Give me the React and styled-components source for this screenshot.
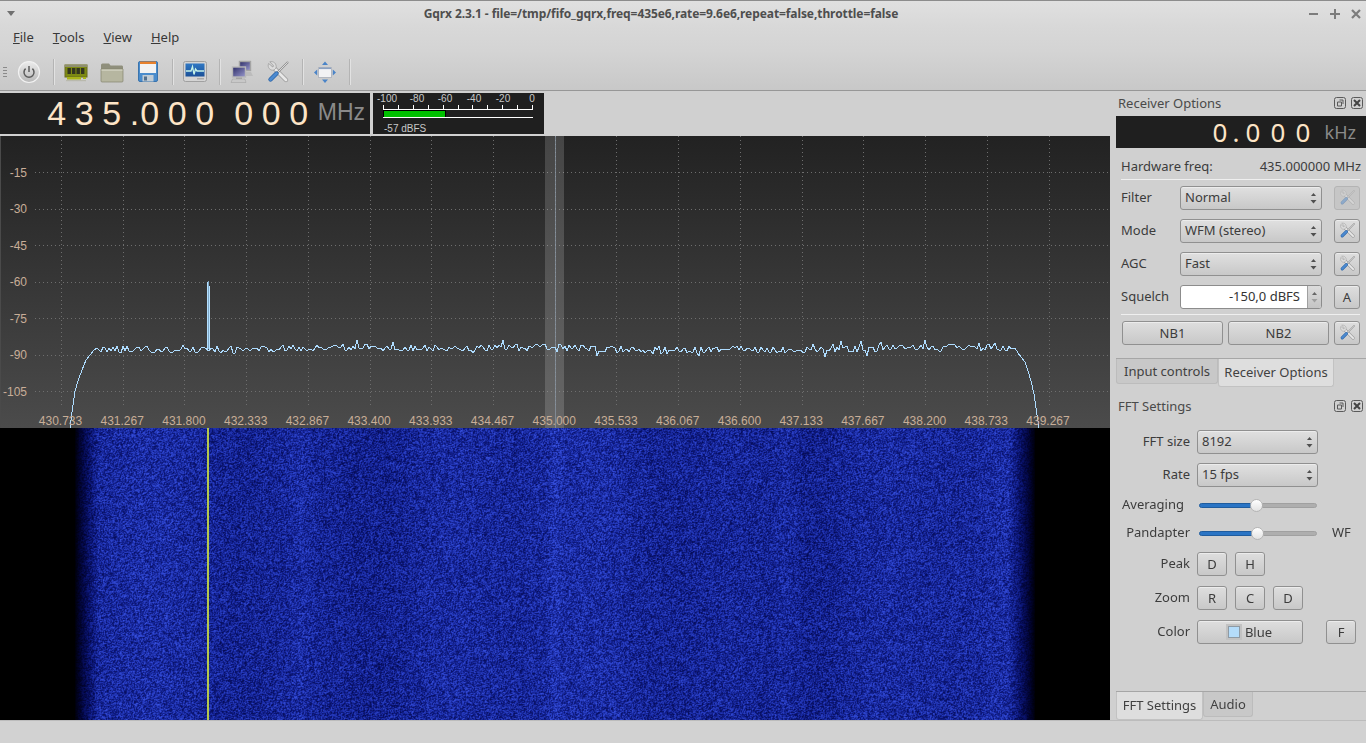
import React, { useEffect, useRef } from 'react';
import styled, { createGlobalStyle } from 'styled-components';

const GlobalStyle = createGlobalStyle`
  html, body { margin: 0; padding: 0; background: #d0d0d0; overflow: hidden; }
  body { font-family: "Noto Sans", "Open Sans", sans-serif; font-size: 13px; color: #3c3c3c; }
  * { box-sizing: border-box; }
`;

const Window = styled.div`
  width: 1366px;
  height: 743px;
  display: flex;
  flex-direction: column;
  background: #d0d0d0;
`;

const TitleBar = styled.div`
  height: 27px;
  border-top: 1px solid #8c8c8c;
  display: flex;
  align-items: center;
  padding: 0 4px 1px 6px;
  background: linear-gradient(#e0e0e0, #d8d8d8);
`;

const TitleText = styled.div`
  flex: 1;
  text-align: center;
  font-size: 12px;
  font-weight: 700;
  letter-spacing: -0.085px;
  padding-right: 2px;
  color: #4e4e4e;
`;

const WinButtons = styled.div`
  display: flex;
  gap: 9px;
  align-items: center;
`;

const MenuBar = styled.div`
  height: 24px;
  display: flex;
  align-items: center;
  padding: 0 0 4px 13px;
  gap: 19px;
  background: linear-gradient(#d8d8d8, #d4d4d4);
`;

const MenuItem = styled.span`
  font-size: 13px;
  color: #383838;
  &::first-letter { text-decoration: underline; }
`;

const ToolBar = styled.div`
  height: 40px;
  display: flex;
  align-items: center;
  padding-top: 2px;
  background: linear-gradient(#d4d4d4, #c8c8c8);
  border-bottom: 1px solid #979797;
`;

const Handle = styled.div`
  width: 4px;
  height: 10px;
  margin: 0 4px 0 3px;
  background: repeating-linear-gradient(#8a8a8a 0 1px, transparent 1px 3px);
`;

const ToolButton = styled.div`
  width: 36px;
  height: 36px;
  display: flex;
  align-items: center;
  justify-content: center;
`;

const ToolSep = styled.div`
  width: 1px;
  height: 26px;
  margin: 0 4px 0 6px;
  background: #b4b4b4;
  box-shadow: 1px 0 0 #e2e2e2;
`;

const Main = styled.div`
  flex: 1;
  display: flex;
  min-height: 0;
`;

const LeftColumn = styled.div`
  width: 1110px;
  display: flex;
  flex-direction: column;
`;

const HeaderRow = styled.div`
  height: 45px;
  padding: 2px 0;
  display: flex;
  gap: 3px;
`;

const FreqDisplay = styled.div`
  width: 370px;
  background: #1f1f1f;
  display: flex;
  justify-content: flex-end;
  align-items: center;
  padding: 0 5px 2px 0;
  font-family: "Liberation Sans", Arial, sans-serif;
`;

const LcdDisplay = styled.div`
  height: 32px;
  background: #1f1f1f;
  display: flex;
  justify-content: flex-end;
  align-items: center;
  padding-right: 10px;
  font-family: "Noto Sans", sans-serif;
`;

const Digit = styled.span`
  width: ${p => p.$w}px;
  margin-left: ${p => p.$shift || 0}px;
  font-size: ${p => p.$size}px;
  color: #fde4c6;
  line-height: 1;
  flex: none;
`;

const Unit = styled.span`
  font-size: ${p => p.$size}px;
  color: #8a8a8a;
  line-height: 1;
  margin-left: ${p => p.$gap || 0}px;
`;

const MeterBox = styled.div`
  width: 171px;
  background: #1f1f1f;
`;

const Plot = styled.div`
  height: 292px;
  background: linear-gradient(#222222, #4b4b4b);
  border-left: 1px solid #4a4a4a;
`;

const Wave = styled.canvas`
  display: block;
  width: 1110px;
  height: 292px;
`;

const VSplitter = styled.div`
  width: 4px;
  margin: 0 1px;
  background-image: radial-gradient(#f6f6f6 0.5px, transparent 0.6px);
  background-size: 2px 2px;
`;

const Dock = styled.div`
  flex: 1;
  display: flex;
  flex-direction: column;
  min-width: 0;
`;

const DockTitle = styled.div`
  height: ${p => p.$h}px;
  display: flex;
  align-items: center;
  justify-content: space-between;
  padding: 0 3px 2px 2px;
  color: #4a4a4a;
  font-size: 13px;
`;

const DockIcons = styled.div`
  display: flex;
  gap: 5px;
`;

const InfoRow = styled.div`
  height: 31px;
  padding: 9px 5px 0;
  display: flex;
  justify-content: space-between;
  line-height: 18px;
`;

const Rule = styled.div`
  height: 1px;
  margin: ${p => p.$mt}px 6px ${p => p.$mb}px 5px;
  background: #efefef;
`;

const Row = styled.div`
  height: 24px;
  margin-top: ${p => p.$mt || 0}px;
  display: flex;
  align-items: center;
  padding-left: 5px;
`;

const RowLabel = styled.span`
  width: 59px;
  flex: none;
  margin-bottom: 2px;
`;

const ComboBox = styled.div`
  width: ${p => p.$w}px;
  height: 24px;
  flex: none;
  display: flex;
  align-items: center;
  justify-content: space-between;
  padding: 0 4px 0 4px;
  border: 1px solid #909090;
  border-radius: 3px;
  background: linear-gradient(#e0e0e0, #c8c8c8);
  box-shadow: inset 0 1px 0 #ececec;
`;

const ComboText = styled.span`
  margin-bottom: 2px;
`;

const SpinBox = styled.div`
  width: 142px;
  height: 24px;
  flex: none;
  display: flex;
  border: 1px solid #8c8c8c;
  border-radius: 3px;
  background: #fff;
  overflow: hidden;
`;

const SpinValue = styled.div`
  flex: 1;
  text-align: right;
  padding-right: 7px;
  line-height: 20px;
  color: #333;
`;

const SpinArrows = styled.div`
  width: 14px;
  display: flex;
  align-items: center;
  justify-content: center;
  border-left: 1px solid #a0a0a0;
  background: linear-gradient(#dcdcdc, #c4c4c4);
`;

const PushButton = styled.div`
  width: ${p => p.$w}px;
  height: 24px;
  flex: none;
  margin-left: ${p => p.$ml || 0}px;
  display: flex;
  align-items: center;
  justify-content: center;
  gap: 5px;
  padding-bottom: 1px;
  border: 1px solid ${p => (p.$off ? '#b4b4b4' : '#909090')};
  border-radius: 3px;
  background: ${p => (p.$off ? '#c6c6c6' : 'linear-gradient(#dedede, #c8c8c8)')};
  box-shadow: ${p => (p.$off ? 'none' : 'inset 0 1px 0 #ececec')};
`;

const Swatch = styled.span`
  width: 12px;
  height: 12px;
  background: #b4dcfa;
  border: 1px solid #8e9aa4;
  outline: 2px solid #c2c2c2;
`;

const TabBar = styled.div`
  margin-top: ${p => p.$mt || 0}px;
  border-top: 1px solid #a6a6a6;
  display: flex;
  align-items: flex-start;
`;

const Tab = styled.div`
  height: ${p => (p.$on ? 28 : 25)}px;
  width: ${p => p.$w}px;
  display: flex;
  align-items: center;
  justify-content: center;
  color: #414141;
  background: ${p => (p.$on ? '#dedede' : '#c8c8c8')};
  border: 1px solid ${p => (p.$on ? '#c2c2c2' : '#bcbcbc')};
  border-top: none;
  border-radius: 0 0 3px 3px;
  padding-bottom: ${p => (p.$on ? 2 : 0)}px;
`;

const HSplitter = styled.div`
  height: 4px;
  margin-top: 1px;
  background-image: radial-gradient(#f6f6f6 0.5px, transparent 0.6px);
  background-size: 2px 2px;
`;

const FftRow = styled.div`
  height: ${p => p.$h || 24}px;
  margin-top: ${p => p.$mt || 0}px;
  display: flex;
  align-items: center;
  padding-left: 4px;
`;

const FftLabel = styled.span`
  width: 70px;
  flex: none;
  text-align: right;
  margin-bottom: 2px;
  padding-right: ${p => p.$pr || 0}px;
`;

const Controls = styled.div`
  display: flex;
  align-items: center;
  margin-left: ${p => p.$ml ?? 7}px;
`;

const SliderTrack = styled.div`
  width: 118px;
  height: 5px;
  display: flex;
  align-items: center;
`;

const SliderFill = styled.div`
  height: 5px;
  background: #2a74c4;
  border: 1px solid #1f5c9e;
  border-radius: 3px 0 0 3px;
`;

const SliderRest = styled.div`
  flex: 1;
  height: 5px;
  background: #aeaeae;
  border: 1px solid #a0a0a0;
  border-radius: 0 3px 3px 0;
`;

const SliderThumb = styled.div`
  width: 13px;
  height: 13px;
  flex: none;
  margin: 0 -1px;
  border-radius: 50%;
  background: linear-gradient(#ffffff, #e2e2e2);
  border: 1px solid #b4b4b4;
  position: relative;
`;

const SideNote = styled.span`
  margin: 0 0 2px 15px;
`;

const BottomTabs = styled.div`
  margin-top: auto;
`;

const StatusBar = styled.div`
  height: 23px;
  border-top: 1px solid #bcbcbc;
  background: #d2d2d2;
`;

// mulberry32, a plain LCG shows diagonal streaks in the waterfall
function seeded(seed) {
  let a = seed;
  return () => {
    a = (a + 0x6d2b79f5) | 0;
    let t = Math.imul(a ^ (a >>> 15), 1 | a);
    t = (t + Math.imul(t ^ (t >>> 7), 61 | t)) ^ t;
    return ((t ^ (t >>> 14)) >>> 0) / 4294967296;
  };
}

const X_LABELS = ['430.733', '431.267', '431.800', '432.333', '432.867', '433.400', '433.933', '434.467', '435.000', '435.533', '436.067', '436.600', '437.133', '437.667', '438.200', '438.733', '439.267'];
const Y_LABELS = ['-15', '-30', '-45', '-60', '-75', '-90', '-105'];

function spectrumPoints() {
  const rnd = seeded(42);
  const pts = [[70, 292], [72, 276], [75, 255], [79, 242], [82, 234], [86, 224], [90, 219], [94, 214], [97, 212]];
  for (let x = 99; x < 1013; x += 2) {
    if (x === 207) continue;
    const slow = 1.1 * Math.sin(x / 95) + 0.6 * Math.sin(x / 31);
    let y = 212.5 + slow + (rnd() - 0.5) * 7;
    const r = rnd();
    if (r > 0.95) y -= 2 + rnd() * 4;
    else if (r < 0.05) y += 2 + rnd() * 3;
    pts.push([x, Math.round(y)]);
  }
  pts.push([1015, 212], [1018, 217], [1021, 221], [1025, 226], [1028, 235], [1031, 245], [1034, 258], [1036, 272], [1039, 292]);
  return pts.map(p => p.join(',')).join(' ');
}

const SPECTRUM = spectrumPoints();

function Spectrum() {
  return (
    <svg width="1109" height="292" viewBox="1 0 1109 292" style={{ display: 'block' }}>
      <g stroke="#6e6e6e" strokeWidth="1" strokeDasharray="1 3">
        {X_LABELS.map((_, i) => {
          const x = Math.round(61 + i * 61.72) + 0.5;
          return <line key={i} x1={x} x2={x} y1="0" y2="270" />;
        })}
        {Y_LABELS.map((_, i) => {
          const y = Math.round(36 + i * 36.5) + 0.5;
          return <line key={i} x1="35" x2="1110" y1={y} y2={y} />;
        })}
      </g>
      <rect x="545" y="0" width="19" height="292" fill="#fff" opacity="0.16" />
      <line x1="555.5" x2="555.5" y1="0" y2="292" stroke="#8d9aa8" opacity="0.7" />
      <polyline points={SPECTRUM} fill="none" stroke="#aedcff" strokeWidth="1" shapeRendering="crispEdges" />
      <path d="M207.5 213 V146 M209.5 213 V150" fill="none" stroke="#b4e0ff" strokeWidth="1" shapeRendering="crispEdges" />
      <path d="M208.5 213 V145" fill="none" stroke="#7fa8c8" strokeWidth="1" shapeRendering="crispEdges" />
      <g fontFamily="Liberation Sans, Arial, sans-serif" fontSize="12" fill="#c8ae98">
        {X_LABELS.map((t, i) => (
          <text key={t} x={60.5 + i * 61.72} y="289" textAnchor="middle">{t}</text>
        ))}
        {Y_LABELS.map((t, i) => (
          <text key={t} x="27" y={40.5 + i * 36.5} textAnchor="end">{t}</text>
        ))}
      </g>
    </svg>
  );
}

function Waterfall() {
  const ref = useRef(null);
  useEffect(() => {
    const ctx = ref.current.getContext('2d');
    const w = 1110;
    const h = 292;
    const img = ctx.createImageData(w, h);
    const rnd = seeded(7);
    const stride = w + 2;
    const grain = new Float32Array(stride * (h + 2));
    for (let i = 0; i < grain.length; i++) grain[i] = rnd();
    for (let y = 0; y < h; y++) {
      for (let x = 0; x < w; x++) {
        const k = y * stride + x;
        const g = grain[k] * 0.6 + grain[k + 1] * 0.22 + grain[k + stride] * 0.18;
        let env = 1;
        if (x < 74 || x > 1035) env = 0;
        else if (x < 98) env = Math.pow((x - 74) / 24, 0.8);
        else if (x > 1008) env = Math.pow((1035 - x) / 27, 0.8);
        const band = 0.025 * Math.sin(x / 70) + 0.02 * Math.sin(x / 23 + 1)
          + 0.06 * Math.exp(-Math.pow((x - 555) / 6, 2))
          + 0.05 * Math.exp(-Math.pow((x - 785) / 12, 2))
          + 0.04 * Math.exp(-Math.pow((x - 300) / 10, 2));
        const t = env * Math.max(0, 0.57 + band + (g - 0.5) * 0.5);
        const i = (y * w + x) * 4;
        img.data[i] = Math.min(255, Math.pow(t, 2.4) * 85);
        img.data[i + 1] = Math.min(255, Math.pow(t, 2) * 115);
        img.data[i + 2] = Math.min(255, t * 265);
        img.data[i + 3] = 255;
      }
    }
    ctx.putImageData(img, 0, 0);
    ctx.fillStyle = '#b4c84e';
    ctx.fillRect(207, 0, 2, h);
  }, []);
  return <Wave ref={ref} width="1110" height="292" />;
}

function Meter() {
  const ticks = Array.from({ length: 11 }, (_, i) => Math.round(10 + i * 14.9) + 0.5);
  const labels = [['-100', 14], ['-80', 44], ['-60', 72], ['-40', 101], ['-20', 130], ['0', 159]];
  return (
    <svg width="171" height="41" style={{ display: 'block' }}>
      <g fontFamily="Liberation Sans, Arial, sans-serif" fontSize="10" fill="#c8c8c8">
        {labels.map(([t, x]) => <text key={t} x={x} y="9" textAnchor="middle">{t}</text>)}
        <text x="11" y="39">-57 dBFS</text>
      </g>
      <line x1="10" x2="160" y1="16.5" y2="16.5" stroke="#fff" />
      {ticks.map(x => <line key={x} x1={x} x2={x} y1="12" y2="16" stroke="#fff" />)}
      <rect x="10.5" y="17.5" width="62" height="7" fill="#00c000" stroke="#000" />
      <line x1="10" x2="160" y1="24.5" y2="24.5" stroke="#fff" />
    </svg>
  );
}

function FreqDigits({ text, pitch, dot, space, size, dotShift }) {
  return text.split('').map((c, i) => (
    <Digit
      key={i}
      $size={size}
      $shift={c === '.' ? dotShift : 0}
      $w={c === '.' ? dot : c === ' ' ? space : pitch}
    >
      {c === ' ' ? '\u00a0' : c}
    </Digit>
  ));
}

const UpDown = ({ faded }) => (
  <svg width="7" height="14" viewBox="0 0 7 14">
    <path d="M3.5 2 L6 5 H1 Z" fill={faded ? '#666' : '#505050'} />
    <path d="M3.5 12.5 L6.5 9 H0.5 Z" fill={faded ? '#a0a0a0' : '#505050'} />
  </svg>
);

const Combo = ({ value, w }) => (
  <ComboBox $w={w}>
    <ComboText>{value}</ComboText>
    <UpDown />
  </ComboBox>
);

const FloatIcon = () => (
  <svg width="12" height="12" viewBox="0 0 12 12" fill="none" stroke="#5a5a5a">
    <rect x="0.5" y="0.5" width="11" height="11" rx="2" />
    <path d="M5.5 3 H9 V7 M3.5 5 H7.5 V9 H3.5 Z" />
  </svg>
);

const CloseIcon = () => (
  <svg width="12" height="12" viewBox="0 0 12 12" fill="none">
    <rect x="0.5" y="0.5" width="11" height="11" rx="2" stroke="#5a5a5a" />
    <path d="M3 3 L9 9 M9 3 L3 9" stroke="#444" strokeWidth="2" />
  </svg>
);

const Tools = ({ size = 24, faded }) => (
  <svg width={size} height={size} viewBox="0 0 24 24" opacity={faded ? 0.45 : 1} fill="none">
    <path d="M8 8 L20 20" stroke="#9c9c9c" strokeWidth="4.4" strokeLinecap="round" />
    <path d="M8 8 L20 20" stroke="#e8e8e8" strokeWidth="2.8" strokeLinecap="round" />
    <path d="M2.5 3.5 L6 6.2 L6.4 7 L7.6 6.2 L6.8 4.6 L3.8 1.8 C7.5 0.8 11 3.5 10 8 L8 10 C4 11 1.2 7.5 2.5 3.5 Z" fill="#dcdcdc" stroke="#9a9a9a" strokeWidth="0.7" />
    <path d="M21.5 2.5 L10 14" stroke="#8e8e8e" strokeWidth="2" strokeLinecap="round" />
    <path d="M21.5 2.5 L10 14" stroke="#dadada" strokeWidth="1" strokeLinecap="round" />
    <path d="M10.5 13.5 L4.5 19.5" stroke="#2f67a8" strokeWidth="4.4" strokeLinecap="round" />
    <path d="M10.5 13.5 L4.5 19.5" stroke="#4c8ad0" strokeWidth="2.8" strokeLinecap="round" />
  </svg>
);

const PowerIcon = () => (
  <svg width="24" height="24" viewBox="0 0 24 24">
    <defs>
      <linearGradient id="pw" x1="0" y1="0" x2="0" y2="1">
        <stop offset="0" stopColor="#ececec" />
        <stop offset="1" stopColor="#b8b8b8" />
      </linearGradient>
    </defs>
    <circle cx="12" cy="12" r="10.5" fill="url(#pw)" stroke="#f2f2f2" strokeWidth="1.2" />
    <path d="M8.6 8.6 A5 5 0 1 0 15.4 8.6" fill="none" stroke="#5c5c5c" strokeWidth="1.5" />
    <line x1="12" y1="6" x2="12" y2="12" stroke="#5c5c5c" strokeWidth="1.5" />
  </svg>
);

const RamIcon = () => (
  <svg width="26" height="24" viewBox="0 0 26 24">
    <rect x="2" y="5" width="22" height="12" fill="#7d8a12" stroke="#6a6c20" />
    <rect x="2" y="5" width="22" height="2" fill="#8f8f70" />
    {[4.5, 9, 13.5, 18].map(x => <rect key={x} x={x} y="8" width="3.4" height="6" fill="#33351f" />)}
    <rect x="4" y="17" width="14" height="2.5" fill="#a8b418" />
    <rect x="20" y="17" width="3" height="2" fill="#a8b418" />
    <rect x="3" y="20" width="20" height="1.2" fill="#b0b0a0" opacity="0.7" />
  </svg>
);

const FolderIcon = () => (
  <svg width="24" height="24" viewBox="0 0 24 24">
    <path d="M1 5 Q1 3.5 2.5 3.5 H9 L10.5 5.5 H22 Q23 5.5 23 7 V12 H1 Z" fill="#8f8f7c" />
    <path d="M1 9 H23 V21 Q23 22 22 22 H2 Q1 22 1 21 Z" fill="#b6b6a0" stroke="#84846e" strokeWidth="0.7" />
    <rect x="1.5" y="9.5" width="21" height="1.2" fill="#d4d4c4" />
  </svg>
);

const FloppyIcon = () => (
  <svg width="24" height="24" viewBox="0 0 24 24">
    <rect x="2.5" y="1.5" width="19" height="20" rx="1.5" fill="#4a8ccc" stroke="#3b74ad" />
    <rect x="4" y="1.5" width="16" height="2.5" fill="#e8812c" />
    <rect x="4" y="4" width="16" height="9" fill="#f2f2f2" />
    <rect x="6.5" y="15" width="11" height="6.5" fill="#c2ccd4" />
    <rect x="8" y="16.5" width="3" height="4" fill="#54708c" />
  </svg>
);

const ScopeIcon = () => (
  <svg width="26" height="24" viewBox="0 0 26 24">
    <defs>
      <linearGradient id="scr" x1="0" y1="0" x2="0" y2="1">
        <stop offset="0" stopColor="#3078c4" />
        <stop offset="1" stopColor="#1a5098" />
      </linearGradient>
    </defs>
    <rect x="1.5" y="1.5" width="23" height="20" rx="2" fill="#d4d4d4" stroke="#a0a0a0" />
    <rect x="3.5" y="3.5" width="19" height="13" fill="url(#scr)" />
    <path d="M4 11 H9 L10.5 6.5 L12 14.5 L13.5 9 L15 11 H22" fill="none" stroke="#c8f4e8" strokeWidth="1.3" />
    <rect x="15" y="18" width="7" height="1.5" fill="#aaa" />
  </svg>
);

const NetworkIcon = () => (
  <svg width="24" height="24" viewBox="0 0 24 24">
    <defs>
      <linearGradient id="net" x1="0" y1="0" x2="1" y2="1">
        <stop offset="0" stopColor="#2c2c66" />
        <stop offset="1" stopColor="#9a9ace" />
      </linearGradient>
    </defs>
    <rect x="9.5" y="1.5" width="11" height="9" fill="url(#net)" stroke="#a4a4a4" strokeWidth="1.4" />
    <path d="M12 12 H21 L23 16 H15 Z" fill="#bcbcbc" />
    <rect x="2.5" y="7" width="13" height="10" fill="url(#net)" stroke="#b8b8b8" strokeWidth="1.4" />
    <rect x="6" y="17.5" width="6" height="1.5" fill="#a4a4a4" />
    <path d="M2.5 19 H15 L16 22.5 H1 Z" fill="#c8c8c8" stroke="#9c9c9c" strokeWidth="0.5" />
  </svg>
);

const MoveIcon = () => (
  <svg width="24" height="24" viewBox="0 0 24 24">
    <rect x="5.5" y="7.5" width="13" height="10" fill="#f2f2f4" stroke="#b4b8c0" />
    <rect x="6" y="7.5" width="12" height="1.6" fill="#8aa0c0" />
    <path d="M12 1.5 L15 5 H9 Z M12 23 L15 19.5 H9 Z M1 12.5 L4.2 9.5 V15.5 Z M23 12.5 L19.8 9.5 V15.5 Z" fill="#4a84c8" />
  </svg>
);

const MinIcon = () => (
  <svg width="12" height="12" viewBox="0 0 12 12"><rect x="1" y="5" width="9" height="2" fill="#7c7c7c" /></svg>
);
const MaxIcon = () => (
  <svg width="12" height="12" viewBox="0 0 12 12"><path d="M5 1 H7 V5 H11 V7 H7 V11 H5 V7 H1 V5 H5 Z" fill="#7c7c7c" /></svg>
);
const XIcon = () => (
  <svg width="12" height="12" viewBox="0 0 12 12"><path d="M2 2 L10 10 M10 2 L2 10" stroke="#7c7c7c" strokeWidth="2.2" /></svg>
);
const DropIcon = () => (
  <svg width="10" height="8" viewBox="0 0 10 8"><path d="M1 1 H9 L5 6 Z" fill="#707070" /></svg>
);

const Slider = ({ fill }) => (
  <SliderTrack>
    <SliderFill style={{ width: fill }} />
    <SliderThumb />
    <SliderRest />
  </SliderTrack>
);

export default function App() {
  return (
    <Window>
      <GlobalStyle />
      <TitleBar>
        <DropIcon />
        <TitleText>Gqrx 2.3.1 - file=/tmp/fifo_gqrx,freq=435e6,rate=9.6e6,repeat=false,throttle=false</TitleText>
        <WinButtons>
          <MinIcon />
          <MaxIcon />
          <XIcon />
        </WinButtons>
      </TitleBar>
      <MenuBar>
        <MenuItem>File</MenuItem>
        <MenuItem>Tools</MenuItem>
        <MenuItem>View</MenuItem>
        <MenuItem>Help</MenuItem>
      </MenuBar>
      <ToolBar>
        <Handle />
        <ToolButton><PowerIcon /></ToolButton>
        <ToolSep />
        <ToolButton><RamIcon /></ToolButton>
        <ToolButton><FolderIcon /></ToolButton>
        <ToolButton><FloppyIcon /></ToolButton>
        <ToolSep />
        <ToolButton><ScopeIcon /></ToolButton>
        <ToolSep />
        <ToolButton><NetworkIcon /></ToolButton>
        <ToolButton><Tools /></ToolButton>
        <ToolSep />
        <ToolButton><MoveIcon /></ToolButton>
        <ToolSep />
      </ToolBar>
      <Main>
        <LeftColumn>
          <HeaderRow>
            <FreqDisplay>
              <FreqDigits text="435.000 000" pitch={27.5} dot={10.5} space={11.5} size={34} dotShift={0} />
              <Unit $size={23} $gap={1}>MHz</Unit>
            </FreqDisplay>
            <MeterBox><Meter /></MeterBox>
          </HeaderRow>
          <Plot><Spectrum /></Plot>
          <Waterfall />
        </LeftColumn>
        <VSplitter />
        <Dock>
          <DockTitle $h={25}>
            <span>Receiver Options</span>
            <DockIcons><FloatIcon /><CloseIcon /></DockIcons>
          </DockTitle>
          <LcdDisplay>
            <FreqDigits text="0.000" pitch={25} dot={13} space={0} size={26} dotShift={-5} />
            <Unit $size={18} $gap={4}>kHz</Unit>
          </LcdDisplay>
          <InfoRow>
            <span>Hardware freq:</span>
            <span>435.000000 MHz</span>
          </InfoRow>
          <Rule $mt={0} $mb={6} />
          <Row>
            <RowLabel>Filter</RowLabel>
            <Combo value="Normal" w={142} />
            <PushButton $w={26} $ml={12} $off><Tools size={17} faded /></PushButton>
          </Row>
          <Row $mt={9}>
            <RowLabel>Mode</RowLabel>
            <Combo value="WFM (stereo)" w={142} />
            <PushButton $w={26} $ml={12}><Tools size={17} /></PushButton>
          </Row>
          <Row $mt={9}>
            <RowLabel>AGC</RowLabel>
            <Combo value="Fast" w={142} />
            <PushButton $w={26} $ml={12}><Tools size={17} /></PushButton>
          </Row>
          <Row $mt={9}>
            <RowLabel>Squelch</RowLabel>
            <SpinBox>
              <SpinValue>-150,0 dBFS</SpinValue>
              <SpinArrows><UpDown faded /></SpinArrows>
            </SpinBox>
            <PushButton $w={26} $ml={12}>A</PushButton>
          </Row>
          <Rule $mt={5} $mb={6} />
          <Row>
            <PushButton $w={101} $ml={1}>NB1</PushButton>
            <PushButton $w={101} $ml={5}>NB2</PushButton>
            <PushButton $w={26} $ml={5}><Tools size={17} /></PushButton>
          </Row>
          <TabBar $mt={13}>
            <Tab $w={102}>Input controls</Tab>
            <Tab $w={116} $on>Receiver Options</Tab>
          </TabBar>
          <HSplitter />

          <DockTitle $h={30}>
            <span>FFT Settings</span>
            <DockIcons><FloatIcon /><CloseIcon /></DockIcons>
          </DockTitle>
          <FftRow $mt={8}>
            <FftLabel>FFT size</FftLabel>
            <Controls><Combo value="8192" w={121} /></Controls>
          </FftRow>
          <FftRow $mt={9}>
            <FftLabel>Rate</FftLabel>
            <Controls><Combo value="15 fps" w={121} /></Controls>
          </FftRow>
          <FftRow $mt={8} $h={20}>
            <FftLabel $pr={6}>Averaging</FftLabel>
            <Controls $ml={9}><Slider fill={52} /></Controls>
          </FftRow>
          <FftRow $mt={8} $h={20}>
            <FftLabel>Pandapter</FftLabel>
            <Controls $ml={9}>
              <Slider fill={53} />
              <SideNote>WF</SideNote>
            </Controls>
          </FftRow>
          <FftRow $mt={9}>
            <FftLabel>Peak</FftLabel>
            <Controls>
              <PushButton $w={30}>D</PushButton>
              <PushButton $w={30} $ml={8}>H</PushButton>
            </Controls>
          </FftRow>
          <FftRow $mt={10}>
            <FftLabel>Zoom</FftLabel>
            <Controls>
              <PushButton $w={30}>R</PushButton>
              <PushButton $w={30} $ml={8}>C</PushButton>
              <PushButton $w={30} $ml={8}>D</PushButton>
            </Controls>
          </FftRow>
          <FftRow $mt={10}>
            <FftLabel>Color</FftLabel>
            <Controls>
              <PushButton $w={106}><Swatch />Blue</PushButton>
              <PushButton $w={30} $ml={23}>F</PushButton>
            </Controls>
          </FftRow>
          <BottomTabs>
            <TabBar>
              <Tab $w={87} $on>FFT Settings</Tab>
              <Tab $w={50}>Audio</Tab>
            </TabBar>
          </BottomTabs>
        </Dock>
      </Main>
      <StatusBar />
    </Window>
  );
}
